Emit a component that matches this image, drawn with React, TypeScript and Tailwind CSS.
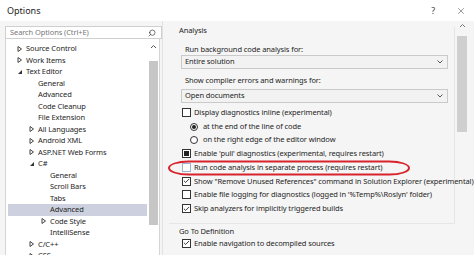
import React from "react";
import { X, Search, Check } from "lucide-react";

type Node = { label: string; depth: number; arrow?: "open" | "closed"; selected?: boolean };

const tree: Node[] = [
  { label: "Source Control", depth: 0, arrow: "closed" },
  { label: "Work Items", depth: 0, arrow: "closed" },
  { label: "Text Editor", depth: 0, arrow: "open" },
  { label: "General", depth: 1 },
  { label: "Advanced", depth: 1 },
  { label: "Code Cleanup", depth: 1 },
  { label: "File Extension", depth: 1 },
  { label: "All Languages", depth: 1, arrow: "closed" },
  { label: "Android XML", depth: 1, arrow: "closed" },
  { label: "ASP.NET Web Forms", depth: 1, arrow: "closed" },
  { label: "C#", depth: 1, arrow: "open" },
  { label: "General", depth: 2 },
  { label: "Scroll Bars", depth: 2 },
  { label: "Tabs", depth: 2 },
  { label: "Advanced", depth: 2, selected: true },
  { label: "Code Style", depth: 2, arrow: "closed" },
  { label: "IntelliSense", depth: 2 },
  { label: "C/C++", depth: 1, arrow: "closed" },
  { label: "CSS", depth: 1, arrow: "closed" },
];

const indent = ["pl-[8px]", "pl-[20px]", "pl-[32px]"];

type BoxState = "off" | "on" | "fill" | "hover";

const Arrow: React.FC<{ kind?: "open" | "closed" }> = ({ kind }) => {
  if (!kind) return <span className="w-[8px] shrink-0" />;
  return (
    <svg width="8" height="8" viewBox="0 0 8 8" className="shrink-0">
      {kind === "closed" ? (
        <path d="M2 1.5 L5.5 4 L2 6.5 Z" fill="none" stroke="#444" strokeWidth="1" />
      ) : (
        <path d="M6 2 L6 6 L2 6 Z" fill="#333" />
      )}
    </svg>
  );
};

const Box: React.FC<{ state: BoxState }> = ({ state }) => (
  <span
    className={`w-[9px] h-[9px] border bg-white flex items-center justify-center shrink-0 ${
      state === "hover" ? "border-[#9db3d3]" : "border-[#333]"
    }`}
  >
    {state === "on" && <Check size={8} strokeWidth={3} color="#222" />}
    {state === "fill" && <span className="w-[5px] h-[5px] bg-[#222]" />}
  </span>
);

const CheckRow: React.FC<{ state: BoxState; label: string; circled?: boolean }> = ({
  state,
  label,
  circled,
}) => (
  <div className="relative flex items-center gap-[3px] pl-[3px] h-[13.7px] whitespace-nowrap">
    <Box state={state} />
    <span>{label}</span>
    {circled && (
      <span className="absolute left-[-11px] top-1/2 -translate-y-1/2 w-[242px] h-[15px] border-2 border-[#d8232c] rounded-[22px/8px]" />
    )}
  </div>
);

const Radio: React.FC<{ on?: boolean; label: string }> = ({ on, label }) => (
  <div className="flex items-center gap-[5px] pl-[11px] h-[13.7px] whitespace-nowrap">
    <span className="w-[8px] h-[8px] rounded-full border border-[#333] bg-white flex items-center justify-center shrink-0">
      {on && <span className="w-[4px] h-[4px] rounded-full bg-[#222]" />}
    </span>
    <span>{label}</span>
  </div>
);

const Dropdown: React.FC<{ value: string }> = ({ value }) => (
  <div className="ml-[2px] w-[267px] h-[14px] border border-[#cacaca] bg-[#f2f2f2] flex items-center justify-between pl-[3px] pr-[4px]">
    <span>{value}</span>
    <svg width="6" height="4" viewBox="0 0 6 4">
      <path d="M0.5 0.5 L3 3 L5.5 0.5" fill="none" stroke="#555" strokeWidth="1" />
    </svg>
  </div>
);

export default function App() {
  return (
    <div
      className="w-[474px] h-[255px] overflow-hidden bg-white text-[#1e1e1e] text-[7.5px] tracking-[-0.1px] leading-none flex flex-col"
      style={{ fontFamily: '"Segoe UI", "Noto Sans", sans-serif' }}
    >
      {/* title bar */}
      <div className="h-[21px] shrink-0 flex items-center pl-[7px] pr-[8px]">
        <span className="text-[9px] tracking-normal">Options</span>
        <span className="ml-auto mr-[21px] text-[9px] text-[#444]">?</span>
        <X size={10} strokeWidth={1.2} color="#333" />
      </div>

      <div className="flex flex-1 min-h-0 bg-[#f5f5f5]">
        {/* left: search + tree */}
        <div className="w-[162px] shrink-0 pl-[5px] pt-[5px] flex flex-col">
          <div className="h-[13px] border border-[#cfcfcf] bg-white flex items-center pl-[4px] pr-[5px] text-[#777]">
            <span>Search Options (Ctrl+E)</span>
            <Search size={8} strokeWidth={2} color="#333" className="ml-auto -scale-x-100" />
          </div>
          <div className="flex flex-1 min-h-0 bg-white border-x border-[#d5d5d5] mr-[2px]">
            <div className="flex-1 pt-[4px] pl-[2px] overflow-hidden">
              {tree.map((n, i) => (
                <div
                  key={i}
                  className={`h-[11.5px] flex items-center gap-[2px] whitespace-nowrap ${indent[n.depth]} ${
                    n.selected ? "bg-[#cdd1df]" : ""
                  }`}
                >
                  <Arrow kind={n.arrow} />
                  <span>{n.label}</span>
                </div>
              ))}
            </div>
            <div className="w-[12px] shrink-0 flex flex-col items-center pt-[5px]">
              <svg width="7" height="5" viewBox="0 0 7 5">
                <path d="M1 4 L3.5 1.5 L6 4" fill="none" stroke="#555" strokeWidth="1" />
              </svg>
              <div className="mt-[12px] w-[9px] h-[164px] bg-[#c6c6c6]" />
            </div>
          </div>
        </div>

        {/* right: options page */}
        <div className="relative flex-1 min-w-0 border-l border-[#e2e2e2] pl-[6px] overflow-hidden">
          <div className="flex flex-col w-[300px] pt-[6px]">
            <div className="w-[286px] border-r border-b border-[#e6e6e6] pl-[10px] pb-[7px]">
              <div className="h-[8px] flex items-center">Analysis</div>
              <div className="mt-[10px] pl-[6px] h-[10px] flex items-center">Run background code analysis for:</div>
              <Dropdown value="Entire solution" />
              <div className="mt-[7px] pl-[6px] h-[10px] flex items-center">Show compiler errors and warnings for:</div>
              <div className="mt-[3px]">
                <Dropdown value="Open documents" />
              </div>
              <div className="mt-[3px]">
                <CheckRow state="off" label="Display diagnostics inline (experimental)" />
                <Radio on label="at the end of the line of code" />
                <Radio label="on the right edge of the editor window" />
                <CheckRow state="fill" label="Enable 'pull' diagnostics (experimental, requires restart)" />
                <CheckRow state="hover" circled label="Run code analysis in separate process (requires restart)" />
                <CheckRow
                  state="on"
                  label={'Show "Remove Unused References" command in Solution Explorer (experimental)'}
                />
                <CheckRow state="off" label="Enable file logging for diagnostics (logged in '%Temp%\Roslyn' folder)" />
                <CheckRow state="on" label="Skip analyzers for implicitly triggered builds" />
              </div>
            </div>
            <div className="pl-[10px]">
              <div className="mt-[3px] h-[10px] flex items-center">Go To Definition</div>
              <CheckRow state="on" label="Enable navigation to decompiled sources" />
            </div>
          </div>

          {/* vertical scrollbar overlay */}
          <div className="absolute right-[7px] top-[2px] w-[10px] flex flex-col items-center">
            <svg width="7" height="5" viewBox="0 0 7 5">
              <path d="M1 4 L3.5 1.5 L6 4" fill="none" stroke="#777" strokeWidth="1" />
            </svg>
            <div className="mt-[8px] w-[10px] h-[96px] bg-[#cfcfcf]" />
          </div>
        </div>
      </div>
    </div>
  );
}
